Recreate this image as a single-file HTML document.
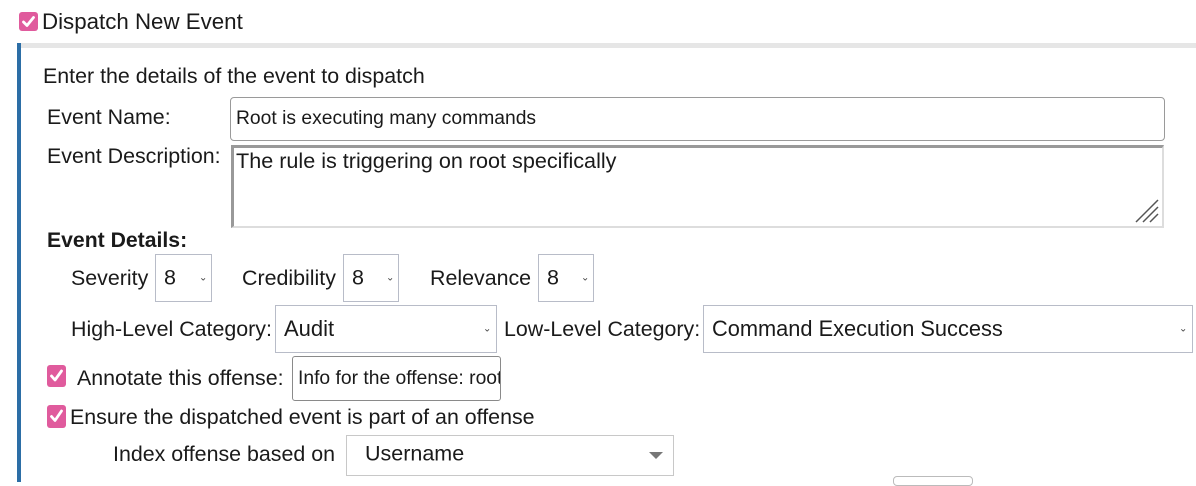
<!DOCTYPE html>
<html><head><meta charset="utf-8"><style>
*{box-sizing:border-box;margin:0;padding:0}
body{width:1196px;height:482px;overflow:hidden;background:#fff;font-family:"Liberation Sans",Arial,sans-serif;color:#1a1a1a;position:relative}
.a{position:absolute;white-space:nowrap}
.t{font-size:21.4px;line-height:24px}
.cb{position:absolute;width:19px;height:19px;background:#e05b9d;border-radius:3px}
.cb svg{position:absolute;left:2px;top:2px}
.sel{position:absolute;border:1px solid #b8bcc8;background:#fff;font-size:21.5px}
.sel span{position:absolute;top:50%;transform:translateY(-50%)}
.chev{position:absolute;top:50%;transform:translateY(-50%);font-size:10px;color:#444}
</style></head><body>
<div class="cb" style="left:19px;top:12px"><svg width="15" height="15" viewBox="0 0 15 15"><path d="M2.5 8 L6 11.5 L12.5 3.5" stroke="#fff" stroke-width="2.8" fill="none" stroke-linecap="round" stroke-linejoin="round"/></svg></div>
<div class="a" style="left:42px;top:9px;font-size:22.3px;line-height:26px">Dispatch New Event</div>
<div class="a" style="left:17px;top:43px;width:1179px;height:5px;background:#e6e6e6"></div>
<div class="a" style="left:17px;top:43px;width:4px;height:439px;background:#2c6ea6"></div>
<div class="a t" style="left:43px;top:64px">Enter the details of the event to dispatch</div>
<div class="a t" style="left:47px;top:105px">Event Name:</div>
<div class="a" style="left:230px;top:97px;width:935px;height:44px;border:1px solid #9a9a9a;border-radius:4px"></div>
<div class="a" style="left:236px;top:108px;font-size:19.3px;line-height:22px">Root is executing many commands</div>
<div class="a t" style="left:47px;top:144px">Event Description:</div>
<div class="a" style="left:231px;top:145px;width:933px;height:83px;border:2px solid #ddd;border-top:3px solid #999;border-left:3px solid #999"></div>
<div class="a" style="left:236px;top:149px;font-size:21.6px;line-height:24px">The rule is triggering on root specifically</div>
<svg class="a" style="left:1134px;top:198px" width="26" height="26"><path d="M2 24 L24 2 M9 24 L24 9 M16 24 L24 16" stroke="#555" stroke-width="1.5"/></svg>
<div class="a t" style="left:47px;top:229px;font-weight:bold;font-size:21.2px">Event Details:</div>
<div class="a t" style="left:71px;top:266px">Severity</div>
<div class="sel" style="left:155px;top:254px;width:57px;height:48px"><span style="left:8px">8</span><span class="chev" style="left:43px">⌄</span></div>
<div class="a t" style="left:242px;top:266px">Credibility</div>
<div class="sel" style="left:343px;top:254px;width:56px;height:48px"><span style="left:8px">8</span><span class="chev" style="left:42px">⌄</span></div>
<div class="a t" style="left:430px;top:266px">Relevance</div>
<div class="sel" style="left:538px;top:254px;width:56px;height:48px"><span style="left:8px">8</span><span class="chev" style="left:42px">⌄</span></div>
<div class="a t" style="left:71px;top:317px">High-Level Category:</div>
<div class="sel" style="left:275px;top:305px;width:222px;height:48px;font-size:22px"><span style="left:8px">Audit</span><span class="chev" style="left:207px">⌄</span></div>
<div class="a t" style="left:504px;top:317px">Low-Level Category:</div>
<div class="sel" style="left:703px;top:305px;width:490px;height:48px;font-size:21.8px"><span style="left:8px">Command Execution Success</span><span class="chev" style="left:475px">⌄</span></div>
<div class="cb" style="left:47px;top:365px;width:19px;height:22px"><svg width="15" height="17" viewBox="0 0 15 17"><path d="M2.5 9 L6 13 L12.5 4" stroke="#fff" stroke-width="2.8" fill="none" stroke-linecap="round" stroke-linejoin="round"/></svg></div>
<div class="a t" style="left:77px;top:366px">Annotate this offense:</div>
<div class="a" style="left:292px;top:356px;width:209px;height:45px;border:1px solid #8a8a8a;border-radius:3px;overflow:hidden"><span style="position:absolute;left:5px;top:11px;font-size:19.3px;line-height:22px;white-space:nowrap">Info for the offense: root</span></div>
<div class="cb" style="left:47px;top:405px;width:19px;height:23px"><svg width="15" height="18" viewBox="0 0 15 18"><path d="M2.5 9.5 L6 13.5 L12.5 4" stroke="#fff" stroke-width="2.8" fill="none" stroke-linecap="round" stroke-linejoin="round"/></svg></div>
<div class="a t" style="left:70px;top:405px">Ensure the dispatched event is part of an offense</div>
<div class="a t" style="left:113px;top:442px">Index offense based on</div>
<div class="sel" style="left:346px;top:435px;width:328px;height:41px;border-color:#c8c8c8;font-size:21.5px"><span style="left:18px;margin-top:-2px">Username</span><svg class="a" style="left:302px;top:16px" width="14" height="8"><path d="M0 0 L14 0 L7 7 Z" fill="#777"/></svg></div>
<div class="a" style="left:893px;top:476px;width:80px;height:10px;border:1px solid #bbb;border-radius:4px"></div>
</body></html>
